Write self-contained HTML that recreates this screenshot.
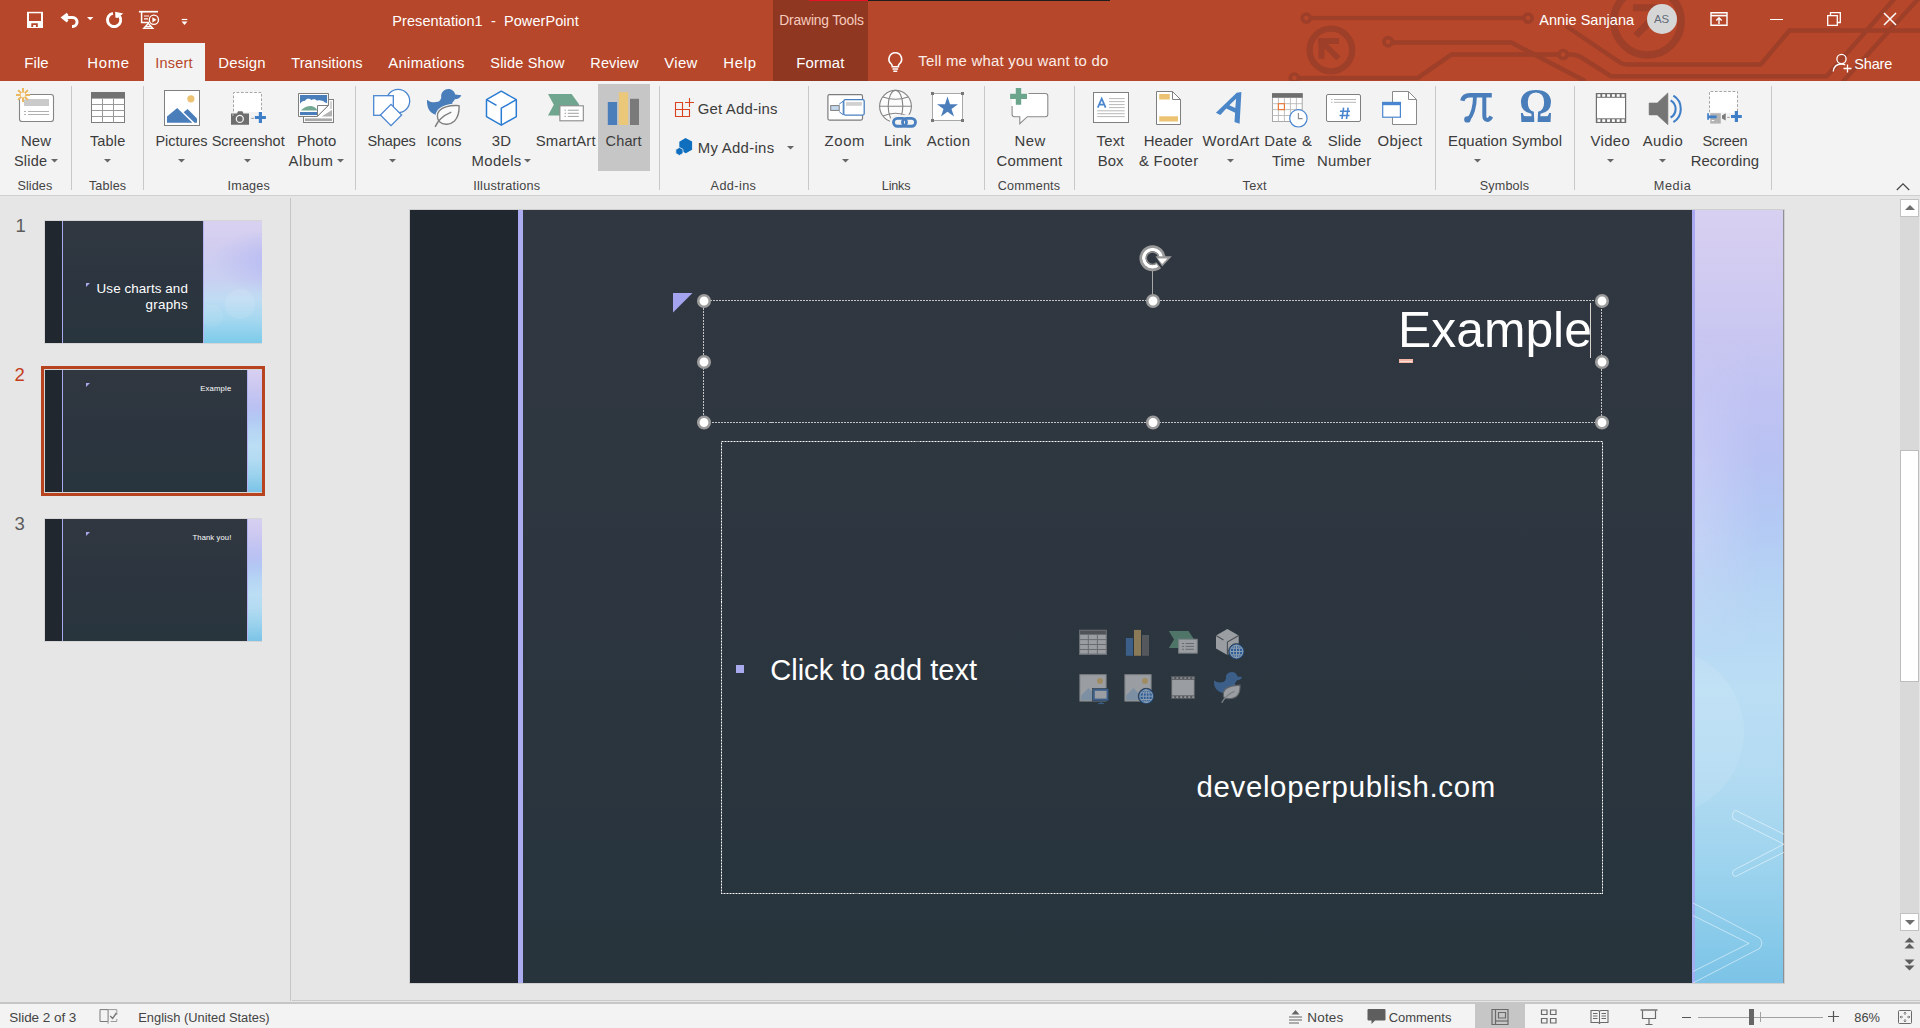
<!DOCTYPE html>
<html><head><meta charset="utf-8"><title>PowerPoint</title>
<style>
html,body{margin:0;padding:0;}
body{width:1920px;height:1028px;overflow:hidden;position:relative;background:#e6e6e6;font-family:"Liberation Sans",sans-serif;}
.b{position:absolute;display:block;}
.t{position:absolute;white-space:pre;font-family:"Liberation Sans",sans-serif;}
</style></head><body>
<div class="b" style="left:0px;top:0px;width:1920px;height:81px;background:#b7472a;"></div>
<svg class="b" style="left:0px;top:0px;" width="1920" height="81" viewBox="0 0 1920 81">
<g fill="none" stroke="#9e3f29" stroke-width="4.500" stroke-linejoin="round">
<path d="M1310.500 18.100H1523.800"/><circle cx="1306.300" cy="18.100" r="4.100" stroke-width="3.700"/><circle cx="1528.100" cy="18.100" r="4.100" stroke-width="3.700"/>
<circle cx="1330.900" cy="50" r="21.300" stroke-width="6.300"/>
<path d="M1392.300 42.500H1511.300L1585 81"/><circle cx="1388.100" cy="41.800" r="4.100" stroke-width="3.700"/>
<path d="M1298.600 78.100H1417.500L1451.300 54.600H1558.800"/><circle cx="1294.400" cy="78.100" r="4.100" stroke-width="3.700"/><circle cx="1563.100" cy="54.600" r="4.100" stroke-width="3.700"/>
<path d="M1567.300 54.600H1572Q1578 55 1583 58.500L1611.300 76.300H1826.600L1895 -2"/>
<path d="M1566 26L1620 62.500Q1623 64.500 1627 64.500H1760.700L1789.400 30.500H1922"/>
<circle cx="1647.500" cy="21.300" r="33.700" stroke-width="7.500"/>
<path d="M1842.500 82L1919 -2"/>
</g>
<g fill="none" stroke="#9e3f29">
<path d="M1318.100 40.900H1339M1321.500 38.100V58.800" stroke-width="6"/>
<path d="M1320 40L1338.500 58.500" stroke-width="5.600"/>
<path d="M1633 7.800H1664M1636 35.500L1661 10" stroke-width="7"/>
</g></svg>
<div class="b" style="left:773px;top:0px;width:94.7px;height:81px;background:#903722;"></div>
<div class="b" style="left:809px;top:0px;width:59px;height:1.2px;background:#e81123;"></div>
<div class="b" style="left:868px;top:0px;width:242px;height:1.2px;background:#1e1e1e;"></div>
<div class="b" style="left:144px;top:43px;width:61px;height:38px;background:#f3f3f3;"></div>
<svg class="b" style="left:26px;top:11px;" width="18" height="18" viewBox="0 0 18 18"><path d="M1 0.800H17V17H1Z" fill="#ffffff"/><path d="M3 2.300H15V10H3Z" fill="#b7472a"/><path d="M5.300 12.300H11.800V16H9.900V14H7.200V16H5.300Z" fill="#b7472a"/></svg>
<svg class="b" style="left:58px;top:9px;" width="24" height="22" viewBox="0 0 24 22"><g transform="translate(-58 -9)"><path d="M67.700 14L63 17.600L67.700 21.200" fill="none" stroke="#ffffff" stroke-width="3" stroke-linejoin="miter"/><path d="M63 17.600H72.600A4.450 4.450 0 0 1 72.600 26.500H72" fill="none" stroke="#ffffff" stroke-width="3"/></g></svg>
<svg class="b" style="left:86.8px;top:17.1px;" width="7" height="4" viewBox="0 0 7 4"><path d="M0 0H6.400L3.200 3.200Z" fill="#ffffff"/></svg>
<svg class="b" style="left:103px;top:9px;" width="24" height="22" viewBox="0 0 24 22"><g transform="translate(-103 -9)"><path d="M112.950 13.350A6.650 6.650 0 1 0 119.550 16.100" fill="none" stroke="#ffffff" stroke-width="2.900"/><path d="M115.200 11.800L123.200 13.400L117.600 18.100L115.400 17.600Z" fill="#ffffff"/></g></svg>
<svg class="b" style="left:138px;top:9px;" width="24" height="22" viewBox="0 0 24 22"><path d="M0.900 2.700H20" stroke="#ffffff" stroke-width="1.700"/><path d="M3.600 3V13.500H11" fill="none" stroke="#ffffff" stroke-width="1.500"/><path d="M6 7H11M6 9.800H10" stroke="#ffffff" stroke-width="1.200"/><circle cx="15.900" cy="10.800" r="4.600" fill="#b7472a" stroke="#ffffff" stroke-width="1.300"/><path d="M14.400 8.200V13.400L18.500 10.800Z" fill="#ffffff"/><path d="M10.300 14.300L5.800 19.400H14.800Z" fill="none" stroke="#ffffff" stroke-width="1.400"/><path d="M7.500 17.600H13" stroke="#ffffff" stroke-width="1.600"/></svg>
<svg class="b" style="left:181px;top:13px;" width="8" height="13" viewBox="0 0 8 13"><path d="M0.700 6.500H6.300" stroke="#ffffff" stroke-width="1.200"/><path d="M0.500 8.600H6.500L3.500 12Z" fill="#ffffff"/></svg>
<span class="t" id="title" style="left:392.3px;top:12.7px;font-size:14.50px;line-height:17px;color:#fff;letter-spacing:0.07px;">Presentation1  -  PowerPoint</span>
<span class="t" id="dt" style="left:779.3px;top:12.3px;font-size:13.85px;line-height:17px;color:#f6cbbd;letter-spacing:-0.18px;">Drawing Tools</span>
<span class="t" id="annie" style="left:1539.3px;top:11.8px;font-size:14.50px;line-height:17px;color:#fff;letter-spacing:0.04px;">Annie Sanjana</span>
<div class="b" style="left:1647px;top:4px;width:30px;height:30px;border-radius:50%;background:#d6d6d6;"></div>
<span class="t" style="left:1653.9px;top:13.3px;font-size:11.40px;line-height:13px;color:#5f6a78;letter-spacing:0.10px;">AS</span>
<svg class="b" style="left:1710px;top:11px;" width="18" height="16" viewBox="0 0 18 16"><path d="M1 1.7H17V14.3H1Z" fill="none" stroke="#ffffff" stroke-width="1.4"/><path d="M1 4.6H17" stroke="#ffffff" stroke-width="1.6"/><path d="M9 13V7M6.3 9.5L9 6.8L11.7 9.5" fill="none" stroke="#ffffff" stroke-width="1.4"/></svg>
<div class="b" style="left:1770px;top:19px;width:13px;height:1.4px;background:#ffffff;"></div>
<svg class="b" style="left:1827px;top:12px;" width="14" height="14" viewBox="0 0 14 14"><path d="M0.7 3.7H10.3V13.3H0.7Z" fill="none" stroke="#ffffff" stroke-width="1.3"/><path d="M3.5 3.5V0.7H13.3V10.5H10.5" fill="none" stroke="#ffffff" stroke-width="1.3"/></svg>
<svg class="b" style="left:1883px;top:12px;" width="14" height="14" viewBox="0 0 14 14"><path d="M1 1L13 13M13 1L1 13" stroke="#ffffff" stroke-width="1.5"/></svg>
<span class="t" style="left:24.3px;top:54.8px;font-size:14.90px;line-height:17px;color:#fff;letter-spacing:0.10px;">File</span>
<span class="t" style="left:87.3px;top:54.8px;font-size:14.90px;line-height:17px;color:#fff;letter-spacing:0.66px;">Home</span>
<span class="t" style="left:218.3px;top:54.8px;font-size:14.90px;line-height:17px;color:#fff;letter-spacing:0.17px;">Design</span>
<span class="t" style="left:291.3px;top:54.8px;font-size:14.50px;line-height:17px;color:#fff;letter-spacing:0.09px;">Transitions</span>
<span class="t" style="left:388.3px;top:54.8px;font-size:14.90px;line-height:17px;color:#fff;letter-spacing:0.27px;">Animations</span>
<span class="t" style="left:490.3px;top:54.8px;font-size:14.50px;line-height:17px;color:#fff;letter-spacing:0.19px;">Slide Show</span>
<span class="t" style="left:590.3px;top:54.8px;font-size:14.50px;line-height:17px;color:#fff;letter-spacing:0.14px;">Review</span>
<span class="t" style="left:664.3px;top:54.8px;font-size:14.90px;line-height:17px;color:#fff;letter-spacing:0.34px;">View</span>
<span class="t" style="left:723.3px;top:54.8px;font-size:14.90px;line-height:17px;color:#fff;letter-spacing:0.69px;">Help</span>
<span class="t" style="left:796.3px;top:54.8px;font-size:14.90px;line-height:17px;color:#fff;letter-spacing:0.20px;">Format</span>
<span class="t" id="insert" style="left:155.3px;top:54.8px;font-size:14.50px;line-height:17px;color:#b7472a;letter-spacing:0.19px;">Insert</span>
<svg class="b" style="left:886px;top:50px;" width="19" height="24" viewBox="0 0 19 24"><path d="M9.300 2.800A6.300 6.300 0 0 0 5.300 14C6.100 14.900 6.300 15.700 6.300 16.800H12.300C12.300 15.700 12.500 14.900 13.300 14A6.300 6.300 0 0 0 9.300 2.800Z" fill="none" stroke="#ffffff" stroke-width="1.600"/><path d="M6.500 19H12.100M7.300 21.300H11.300" stroke="#ffffff" stroke-width="1.500"/></svg>
<span class="t" id="tell" style="left:918.3px;top:52.9px;font-size:14.90px;line-height:17px;color:#fcece7;letter-spacing:0.24px;">Tell me what you want to do</span>
<svg class="b" style="left:1832px;top:53px;" width="22" height="20" viewBox="0 0 22 20"><circle cx="9.5" cy="6" r="4.6" fill="none" stroke="#ffffff" stroke-width="1.3"/><path d="M1.2 18.5C1.8 13.5 5 11 9.5 11C11 11 12.2 11.3 13.2 11.8" fill="none" stroke="#ffffff" stroke-width="1.3"/><path d="M15.5 11.5V19.5M11.5 15.5H19.5" stroke="#ffffff" stroke-width="1.3"/></svg>
<span class="t" id="share" style="left:1854.3px;top:55.5px;font-size:14.50px;line-height:17px;color:#fff;letter-spacing:-0.16px;">Share</span>
<div class="b" style="left:0px;top:81px;width:1920px;height:114px;background:#f3f3f3;"></div>
<div class="b" style="left:0px;top:194.5px;width:1920px;height:1.5px;background:#d0d0d0;"></div>
<div class="b" style="left:70.5px;top:86px;width:1.2px;height:104px;background:#c8c8c8;"></div>
<div class="b" style="left:143.0px;top:86px;width:1.2px;height:104px;background:#c8c8c8;"></div>
<div class="b" style="left:354.5px;top:86px;width:1.2px;height:104px;background:#c8c8c8;"></div>
<div class="b" style="left:659.0px;top:86px;width:1.2px;height:104px;background:#c8c8c8;"></div>
<div class="b" style="left:808.0px;top:86px;width:1.2px;height:104px;background:#c8c8c8;"></div>
<div class="b" style="left:984.0px;top:86px;width:1.2px;height:104px;background:#c8c8c8;"></div>
<div class="b" style="left:1074.0px;top:86px;width:1.2px;height:104px;background:#c8c8c8;"></div>
<div class="b" style="left:1435.0px;top:86px;width:1.2px;height:104px;background:#c8c8c8;"></div>
<div class="b" style="left:1574.0px;top:86px;width:1.2px;height:104px;background:#c8c8c8;"></div>
<div class="b" style="left:1771.0px;top:86px;width:1.2px;height:104px;background:#c8c8c8;"></div>
<div class="b" style="left:598px;top:84px;width:52px;height:87px;background:#c6c6c6;"></div>
<span class="t" style="left:20.9px;top:132.5px;font-size:14.90px;line-height:17px;color:#3c3c3c;letter-spacing:0.20px;">New</span>
<span class="t" style="left:13.9px;top:152.7px;font-size:14.50px;line-height:17px;color:#3c3c3c;letter-spacing:0.21px;">Slide</span>
<svg class="b" style="left:50.5px;top:158.9px;" width="7" height="4" viewBox="0 0 7 4"><path d="M0 0H7L3.5 3.5Z" fill="#666"/></svg>
<span class="t" style="left:17.5px;top:178.9px;font-size:12.60px;line-height:15px;color:#444444;letter-spacing:0.08px;">Slides</span>
<span class="t" style="left:89.9px;top:132.5px;font-size:14.50px;line-height:17px;color:#3c3c3c;letter-spacing:0.17px;">Table</span>
<svg class="b" style="left:104.3px;top:158.9px;" width="7" height="4" viewBox="0 0 7 4"><path d="M0 0H7L3.5 3.5Z" fill="#666"/></svg>
<span class="t" style="left:88.9px;top:178.9px;font-size:12.60px;line-height:15px;color:#444444;letter-spacing:0.16px;">Tables</span>
<span class="t" id="pictures" style="left:155.5px;top:132.5px;font-size:14.50px;line-height:17px;color:#3c3c3c;letter-spacing:-0.05px;">Pictures</span>
<svg class="b" style="left:178.4px;top:158.9px;" width="7" height="4" viewBox="0 0 7 4"><path d="M0 0H7L3.5 3.5Z" fill="#666"/></svg>
<span class="t" style="left:211.7px;top:132.5px;font-size:14.50px;line-height:17px;color:#3c3c3c;letter-spacing:-0.04px;">Screenshot</span>
<svg class="b" style="left:244.4px;top:158.9px;" width="7" height="4" viewBox="0 0 7 4"><path d="M0 0H7L3.5 3.5Z" fill="#666"/></svg>
<span class="t" style="left:296.9px;top:132.5px;font-size:14.90px;line-height:17px;color:#3c3c3c;letter-spacing:0.09px;">Photo</span>
<span class="t" style="left:288.6px;top:152.7px;font-size:14.90px;line-height:17px;color:#3c3c3c;letter-spacing:0.53px;">Album</span>
<svg class="b" style="left:336.5px;top:158.9px;" width="7" height="4" viewBox="0 0 7 4"><path d="M0 0H7L3.5 3.5Z" fill="#666"/></svg>
<span class="t" style="left:227.5px;top:178.9px;font-size:12.60px;line-height:15px;color:#444444;letter-spacing:0.21px;">Images</span>
<span class="t" style="left:367.4px;top:132.5px;font-size:14.50px;line-height:17px;color:#3c3c3c;letter-spacing:-0.15px;">Shapes</span>
<svg class="b" style="left:388.5px;top:158.9px;" width="7" height="4" viewBox="0 0 7 4"><path d="M0 0H7L3.5 3.5Z" fill="#666"/></svg>
<span class="t" style="left:426.5px;top:132.5px;font-size:14.50px;line-height:17px;color:#3c3c3c;letter-spacing:0.11px;">Icons</span>
<span class="t" style="left:491.7px;top:132.5px;font-size:14.90px;line-height:17px;color:#3c3c3c;letter-spacing:0.28px;">3D</span>
<span class="t" style="left:471.5px;top:152.7px;font-size:14.90px;line-height:17px;color:#3c3c3c;letter-spacing:0.36px;">Models</span>
<svg class="b" style="left:524.4px;top:158.9px;" width="7" height="4" viewBox="0 0 7 4"><path d="M0 0H7L3.5 3.5Z" fill="#666"/></svg>
<span class="t" style="left:535.8px;top:132.5px;font-size:14.90px;line-height:17px;color:#3c3c3c;letter-spacing:0.14px;">SmartArt</span>
<span class="t" style="left:605.6px;top:132.5px;font-size:14.50px;line-height:17px;color:#3c3c3c;letter-spacing:0.13px;">Chart</span>
<span class="t" style="left:473.3px;top:178.9px;font-size:12.68px;line-height:15px;color:#444444;letter-spacing:0.23px;">Illustrations</span>
<span class="t" style="left:697.7px;top:100.8px;font-size:14.90px;line-height:17px;color:#3c3c3c;letter-spacing:0.20px;">Get Add-ins</span>
<span class="t" style="left:697.7px;top:139.6px;font-size:14.90px;line-height:17px;color:#3c3c3c;letter-spacing:0.31px;">My Add-ins</span>
<svg class="b" style="left:786.5px;top:146.20000000000002px;" width="7" height="4" viewBox="0 0 7 4"><path d="M0 0H7L3.5 3.5Z" fill="#666"/></svg>
<span class="t" style="left:710.6px;top:178.9px;font-size:12.68px;line-height:15px;color:#444444;letter-spacing:0.39px;">Add-ins</span>
<span class="t" style="left:824.6px;top:132.5px;font-size:14.90px;line-height:17px;color:#3c3c3c;letter-spacing:0.58px;">Zoom</span>
<svg class="b" style="left:841.5px;top:158.9px;" width="7" height="4" viewBox="0 0 7 4"><path d="M0 0H7L3.5 3.5Z" fill="#666"/></svg>
<span class="t" style="left:884.1px;top:132.5px;font-size:14.50px;line-height:17px;color:#3c3c3c;letter-spacing:0.07px;">Link</span>
<span class="t" style="left:926.8px;top:132.5px;font-size:14.90px;line-height:17px;color:#3c3c3c;letter-spacing:0.36px;">Action</span>
<span class="t" style="left:881.8px;top:178.9px;font-size:12.60px;line-height:15px;color:#444444;letter-spacing:-0.16px;">Links</span>
<span class="t" style="left:1014.5px;top:132.5px;font-size:14.90px;line-height:17px;color:#3c3c3c;letter-spacing:0.46px;">New</span>
<span class="t" style="left:996.6px;top:152.7px;font-size:14.90px;line-height:17px;color:#3c3c3c;letter-spacing:0.17px;">Comment</span>
<span class="t" style="left:997.8px;top:178.9px;font-size:12.60px;line-height:15px;color:#444444;letter-spacing:0.20px;">Comments</span>
<span class="t" style="left:1096.5px;top:132.5px;font-size:14.90px;line-height:17px;color:#3c3c3c;letter-spacing:0.22px;">Text</span>
<span class="t" style="left:1097.7px;top:152.7px;font-size:14.90px;line-height:17px;color:#3c3c3c;letter-spacing:0.04px;">Box</span>
<span class="t" style="left:1143.7px;top:132.5px;font-size:14.90px;line-height:17px;color:#3c3c3c;letter-spacing:0.11px;">Header</span>
<span class="t" style="left:1138.9px;top:152.7px;font-size:14.90px;line-height:17px;color:#3c3c3c;letter-spacing:0.31px;">&amp; Footer</span>
<span class="t" style="left:1202.6px;top:132.5px;font-size:14.90px;line-height:17px;color:#3c3c3c;letter-spacing:0.38px;">WordArt</span>
<svg class="b" style="left:1227.4px;top:158.9px;" width="7" height="4" viewBox="0 0 7 4"><path d="M0 0H7L3.5 3.5Z" fill="#666"/></svg>
<span class="t" style="left:1264.2px;top:132.5px;font-size:14.90px;line-height:17px;color:#3c3c3c;letter-spacing:0.42px;">Date &amp;</span>
<span class="t" style="left:1271.9px;top:152.7px;font-size:14.90px;line-height:17px;color:#3c3c3c;letter-spacing:0.16px;">Time</span>
<span class="t" style="left:1327.7px;top:132.5px;font-size:14.90px;line-height:17px;color:#3c3c3c;letter-spacing:0.11px;">Slide</span>
<span class="t" style="left:1316.9px;top:152.7px;font-size:14.90px;line-height:17px;color:#3c3c3c;letter-spacing:0.27px;">Number</span>
<span class="t" style="left:1377.5px;top:132.5px;font-size:14.90px;line-height:17px;color:#3c3c3c;letter-spacing:0.32px;">Object</span>
<span class="t" style="left:1242.6px;top:178.9px;font-size:12.68px;line-height:15px;color:#444444;letter-spacing:0.24px;">Text</span>
<span class="t" style="left:1447.9px;top:132.5px;font-size:14.90px;line-height:17px;color:#3c3c3c;letter-spacing:0.08px;">Equation</span>
<svg class="b" style="left:1474.3px;top:158.9px;" width="7" height="4" viewBox="0 0 7 4"><path d="M0 0H7L3.5 3.5Z" fill="#666"/></svg>
<span class="t" style="left:1511.7px;top:132.5px;font-size:14.90px;line-height:17px;color:#3c3c3c;letter-spacing:0.12px;">Symbol</span>
<span class="t" style="left:1479.7px;top:178.9px;font-size:12.60px;line-height:15px;color:#444444;letter-spacing:0.18px;">Symbols</span>
<span class="t" style="left:1590.4px;top:132.5px;font-size:14.90px;line-height:17px;color:#3c3c3c;letter-spacing:0.41px;">Video</span>
<svg class="b" style="left:1607.4px;top:158.9px;" width="7" height="4" viewBox="0 0 7 4"><path d="M0 0H7L3.5 3.5Z" fill="#666"/></svg>
<span class="t" style="left:1642.7px;top:132.5px;font-size:14.90px;line-height:17px;color:#3c3c3c;letter-spacing:0.48px;">Audio</span>
<svg class="b" style="left:1659.2px;top:158.9px;" width="7" height="4" viewBox="0 0 7 4"><path d="M0 0H7L3.5 3.5Z" fill="#666"/></svg>
<span class="t" style="left:1702.6px;top:132.5px;font-size:14.50px;line-height:17px;color:#3c3c3c;letter-spacing:-0.17px;">Screen</span>
<span class="t" style="left:1690.7px;top:152.7px;font-size:14.90px;line-height:17px;color:#3c3c3c;letter-spacing:0.06px;">Recording</span>
<span class="t" style="left:1653.7px;top:178.9px;font-size:12.68px;line-height:15px;color:#444444;letter-spacing:0.65px;">Media</span>
<svg class="b" style="left:1896px;top:183.3px;" width="14" height="8" viewBox="0 0 14 8"><path d="M0.800 7L7 0.900L13.200 7" fill="none" stroke="#444" stroke-width="1.200"/></svg>
<svg class="b" style="left:0px;top:81px;" width="1920" height="113" viewBox="0 81 1920 113"><rect x="19.5" y="94.5" width="34" height="27" rx="2.6" fill="#fff" stroke="#858585" stroke-width="1.1"/><rect x="24" y="99" width="25" height="7" fill="#cacaca"/><path d="M24 111.5H26M28 111.5H49M24 114.5H26M28 114.5H49" stroke="#b0b0b0" stroke-width="1"/><circle cx="23" cy="95" r="5" fill="#f3f3f3"/><g stroke="#ebb85f" stroke-width="2" stroke-linecap="butt"><path d="M23 88V102M16 95H30M18.1 90.1L27.9 99.900M27.900 90.100L18.100 99.900"/></g><circle cx="23" cy="95" r="2.400" fill="#f7f3ea"/><rect x="91.5" y="92.5" width="33" height="30" fill="#fff" stroke="#7d7d7d" stroke-width="1"/><rect x="91" y="92" width="34" height="6.600" fill="#727272"/><path d="M102.5 98.8V122.500M113.500 98.800V122.500M92 104.500H124.500M92 110.500H124.500M92 116.500H124.500" stroke="#9a9a9a" stroke-width="1"/><rect x="164.5" y="90.5" width="35" height="35" fill="#fff" stroke="#7f7f7f" stroke-width="1"/><circle cx="190.9" cy="98.8" r="3.6" fill="#ebc373"/><path d="M167 122.8V116.4L177.2 108.1L192.4 122.8Z" fill="#4a7ebb"/><path d="M183.6 112.2L187.6 109L197 118.4V122.8H194.6Z" fill="#4a7ebb"/><rect x="233" y="92" width="29" height="20" fill="#fff"/><path d="M233.500 111.500V92.500H261.500V111.500" fill="none" stroke="#a6a6a6" stroke-width="1" stroke-dasharray="2.800 1.600"/><path d="M231 113.400H237L238 111.300H242.400L243.400 113.400H249V124.800H231Z" fill="#6e6e6e"/><circle cx="239.800" cy="118.900" r="3.500" fill="none" stroke="#f3f3f3" stroke-width="1.300"/><rect x="232.300" y="114.400" width="1.200" height="1.200" fill="#ddd"/><path d="M251.300 118.400H253.900" stroke="#a0a0a0" stroke-width="1.100"/><path d="M260.400 112V123M254.900 117.500H265.900" stroke="#3f7fc8" stroke-width="3.200"/><rect x="303.500" y="99.500" width="30" height="23" fill="#fff" stroke="#7f7f7f" stroke-width="1"/><rect x="304.900" y="118.400" width="27.100" height="2.700" fill="#a8a8a8"/><path d="M321.600 116.500L332 110V116.500Z" fill="#b2b2b2"/><rect x="329.900" y="101.300" width="2.100" height="7.700" fill="#d2d2d2"/><path d="M298.500 93.500H328.500V105.500L317.500 116.500H298.500Z" fill="#fff" stroke="#7f7f7f" stroke-width="1"/><clipPath id="pacl"><path d="M300 95H327.300V104.800L316.800 115.300H300Z"/></clipPath><g clip-path="url(#pacl)"><rect x="300" y="95" width="27.300" height="20.300" fill="#4a7ebb"/><path d="M300 104C301.500 100.500 304 101.500 305.500 100.200C307 98 310 98.300 311.300 100C313 98.700 316 99 317 100.700C319.500 99.800 323 100.500 325 102.500L327.300 103.300V112H300Z" fill="#fff"/><path d="M300.700 110.500C304 107.200 308 105.800 311 106C314 106.200 316.300 108 317.400 110.500Z" fill="#73a892"/></g><path d="M317.500 116.200V105.500H328.200Z" fill="#fff" stroke="#7f7f7f" stroke-width="1" stroke-linejoin="round"/><circle cx="398.100" cy="101" r="11.600" fill="#fff" stroke="#4a86d0" stroke-width="1.300"/><rect x="373.700" y="95.700" width="19.600" height="19.600" fill="#fff" stroke="#4a86d0" stroke-width="1.300"/><path d="M391 104.400L401.600 115L391 125.600L380.400 115Z" fill="#fff" stroke="#4a86d0" stroke-width="1.300"/><path d="M427 99.800C430 102.500 434.500 103 438.800 101.500C440 100.500 441 99.200 441.300 97.500C440.500 93.500 443.500 89 448.300 89C452 89 454.800 91.600 455.200 94.600L461.300 95.300C460.300 98 457.800 99.300 454.800 99.300C454 101 453 102 452 103C455 107 452 113 447 115.200C440 117 431 114.800 428.300 108.500C427.300 106 426.800 102.800 427 99.800Z" fill="#4a7ebb"/><path d="M459.100 105.600C452 105.200 443.500 106.500 439.300 110.800C436.500 114 437 119 439.500 121.800C443.500 125.500 450.500 124.800 454.500 121C458 117.500 459.300 111.500 459.100 105.600Z" fill="#fbfbfb" stroke="#f3f3f3" stroke-width="3.600" stroke-linejoin="round"/><path d="M459.100 105.600C452 105.200 443.500 106.500 439.300 110.800C436.500 114 437 119 439.500 121.800C443.500 125.500 450.500 124.800 454.500 121C458 117.500 459.300 111.500 459.100 105.600Z" fill="#fbfbfb" stroke="#808080" stroke-width="1.400" stroke-linejoin="round"/><path d="M435.400 126.400C438 120.500 443.500 115.500 450.800 112.400" fill="none" stroke="#808080" stroke-width="1.500" stroke-linecap="round"/><path d="M501.300 91.200L516.300 99.700V116.600L501.300 125.200L486.500 116.600V99.700Z" fill="#fff" stroke="#2b7cd3" stroke-width="1.5" stroke-linejoin="round"/><path d="M501.300 125V108.200L516.300 99.700M486.500 99.700L496.500 105.400" fill="none" stroke="#2b7cd3" stroke-width="1.5"/><path d="M548 94H571.600L579.200 104.500L571.600 115.600H548L553.800 104.700Z" fill="#70a690"/><rect x="559.900" y="105.800" width="23.400" height="15" fill="#fff" stroke="#8a8a8a" stroke-width="1.1"/><path d="M564.500 110.200H566M567.800 110.200H578.800M564.500 113.300H566M567.800 113.300H578.800M564.500 116.400H566M567.800 116.400H578.800" stroke="#a0a0a0" stroke-width="1"/><rect x="607.800" y="102" width="9.300" height="23" fill="#4a7ebb"/><rect x="618.800" y="92.200" width="9.400" height="32.800" fill="#ebc77a"/><rect x="630" y="98.800" width="9" height="26.200" fill="#7a7a7a"/><path d="M675.500 102.500H682.500V109.500H689.500V116.500H675.500ZM682.500 109.500V116.500M675.500 109.500H682.500" fill="none" stroke="#d9421c" stroke-width="1.100"/><path d="M689.500 98V107M685 102.500H694" stroke="#d9421c" stroke-width="1.100"/><path d="M685.500 138L692.100 141.600V149.700L685.800 153.200L679.300 149.700V141.800Z" fill="#106ebe"/><path d="M679.400 147.400L683 149.400V153.400L679.400 155.400L675.800 153.400V149.400Z" fill="#106ebe" stroke="#f3f3f3" stroke-width="0.800"/><rect x="827.900" y="94.700" width="34.600" height="25.400" rx="1.500" fill="#fff" stroke="#7d7d7d" stroke-width="1.200"/><path d="M839.200 104.200L843.200 101.100V114.900L839.200 111.600" fill="#fff" stroke="#4a80bf" stroke-width="1"/><rect x="830.700" y="105.600" width="8.500" height="4.800" fill="#c5d9ee" stroke="#7d7d7d" stroke-width="1"/><rect x="843.800" y="99.600" width="20.400" height="15.500" rx="1.500" fill="#fff" stroke="#4a80bf" stroke-width="1.300"/><rect x="846" y="102.100" width="15.900" height="3.700" fill="#d0d0d0"/><circle cx="895.500" cy="106.300" r="15.900" fill="#fcfcfc"/><g fill="none" stroke="#858585" stroke-width="1.100"><circle cx="895.500" cy="106.300" r="15.900"/><ellipse cx="895.500" cy="106.300" rx="7.300" ry="15.900"/><path d="M879.600 106.300H911.400M883 96.900Q895.500 101.700 908 96.900M883 116Q895.500 110.600 908 116"/></g><rect x="889.800" y="114.800" width="29.500" height="15" rx="7" fill="#f3f3f3"/><g fill="none" stroke="#4a80bf" stroke-width="2.900"><rect x="893.500" y="118.400" width="13" height="7.900" rx="3.950"/><rect x="902.500" y="118.400" width="13" height="7.900" rx="3.950"/></g><rect x="932.500" y="93.500" width="30" height="27" fill="#fff" stroke="#a8a8a8" stroke-width="1"/><g fill="#777"><rect x="931" y="92" width="3" height="3"/><rect x="961" y="92" width="3" height="3"/><rect x="931" y="119" width="3" height="3"/><rect x="961" y="119" width="3" height="3"/></g><path d="M947.500 96.600L950 104.200H958L951.500 108.900L954 116.500L947.500 111.800L941 116.500L943.500 108.900L937 104.200H945Z" fill="#4a7ebb"/><path d="M1014.600 93.500H1045.300A2.500 2.500 0 0 1 1047.800 96V114.200A2.500 2.500 0 0 1 1045.300 116.700H1027.300L1019.800 123.700V116.700H1014.600A2.500 2.500 0 0 1 1012.100 114.200V96A2.500 2.500 0 0 1 1014.600 93.500Z" fill="#fff"/><path d="M1028.500 93.500H1045.300A2.500 2.500 0 0 1 1047.800 96V114.200A2.500 2.500 0 0 1 1045.300 116.700H1027.300L1019.800 123.700V116.700H1014.600A2.500 2.500 0 0 1 1012.100 114.200V106" fill="none" stroke="#8a8a8a" stroke-width="1.100"/><path d="M1018.500 88.100V104.700M1010.100 96.400H1027" stroke="#6aa58c" stroke-width="5.400"/><rect x="1093.500" y="92.500" width="35" height="30" fill="#fff" stroke="#7f7f7f" stroke-width="1"/><path d="M1109 98.600H1124.700M1109 101.600H1124.700M1109 104.600H1124.700M1109 107.600H1124.700M1097.200 110.800H1124.700M1097.200 113.700H1124.700M1097.200 116.600H1124.700" stroke="#b0b0b0" stroke-width="0.900"/><path d="M1097.800 107.700L1101.700 98.600L1105.600 107.700M1099.200 104.700H1104.200" fill="none" stroke="#4a86d0" stroke-width="1.700"/><path d="M1156.500 91.500H1172.500L1180.500 99.500V124.500H1156.500Z" fill="#fff" stroke="#7f7f7f" stroke-width="1"/><path d="M1172.500 91.500V99.500H1180.500" fill="none" stroke="#7f7f7f" stroke-width="1"/><rect x="1159.200" y="94" width="10.600" height="5.500" fill="#ebc373"/><rect x="1159.200" y="116.300" width="18.800" height="5.200" fill="#ebc373"/><path d="M1215.900 112.800L1236.700 92.800L1241.400 92L1239.600 123.700L1234.500 121.900L1235.100 112.700L1226.300 108.600L1220.300 115ZM1229.300 105.200L1235.300 108L1236.100 98.800Z" fill="#4a86c8" fill-rule="evenodd"/><rect x="1272.500" y="93.700" width="29.700" height="27.800" fill="#fff" stroke="#a8a8a8" stroke-width="1"/><rect x="1272" y="93.200" width="30.700" height="4.600" fill="#6e6e6e"/><path d="M1278.400 97.800V121.500M1284.400 97.800V121.500M1290.400 97.800V121.500M1296.400 97.800V121.500M1272.500 103.700H1302.200M1272.500 109.600H1302.200M1272.500 115.500H1302.200" stroke="#b8b8b8" stroke-width="0.900"/><rect x="1278.400" y="103.700" width="6" height="5.900" fill="#fff" stroke="#e8793a" stroke-width="1.200"/><circle cx="1298.400" cy="118.300" r="8.700" fill="#fff" stroke="#4a86d0" stroke-width="1.200"/><path d="M1298.400 113V118.600H1302.600" fill="none" stroke="#8a8a8a" stroke-width="1.100"/><rect x="1326.500" y="94.500" width="34" height="27" rx="1.500" fill="#fff" stroke="#7f7f7f" stroke-width="1"/><path d="M1331 99.500H1332.500M1334 99.500H1356M1331 102.300H1332.500M1334 102.300H1356" stroke="#b0b0b0" stroke-width="0.900"/><path d="M1343.600 107.700L1342 119M1348.100 107.700L1346.500 119M1340 111.300H1350M1339.500 115.500H1349.500" fill="none" stroke="#4a86d0" stroke-width="1.600"/><path d="M1392.500 91.500H1408.500L1416.500 99.500V124.500H1392.500Z" fill="#fff" stroke="#8a8a8a" stroke-width="1"/><path d="M1408.500 91.500V99.500H1416.500" fill="none" stroke="#8a8a8a" stroke-width="1"/><rect x="1382.700" y="102.500" width="17.700" height="14.700" fill="#fff" stroke="#4a86d0" stroke-width="1.200"/><rect x="1382.100" y="101.900" width="18.900" height="3.300" fill="#4a86d0"/><rect x="1595.800" y="93" width="30.400" height="30" fill="#6e6e6e"/><rect x="1597" y="97.800" width="28" height="20.500" fill="#fff"/><rect x="1597.40" y="94.200" width="3" height="2.600" fill="#fff"/><rect x="1602.23" y="94.200" width="3" height="2.600" fill="#fff"/><rect x="1607.06" y="94.200" width="3" height="2.600" fill="#fff"/><rect x="1611.89" y="94.200" width="3" height="2.600" fill="#fff"/><rect x="1616.72" y="94.200" width="3" height="2.600" fill="#fff"/><rect x="1621.55" y="94.200" width="3" height="2.600" fill="#fff"/><rect x="1597.40" y="119.300" width="3" height="2.600" fill="#fff"/><rect x="1602.23" y="119.300" width="3" height="2.600" fill="#fff"/><rect x="1607.06" y="119.300" width="3" height="2.600" fill="#fff"/><rect x="1611.89" y="119.300" width="3" height="2.600" fill="#fff"/><rect x="1616.72" y="119.300" width="3" height="2.600" fill="#fff"/><rect x="1621.55" y="119.300" width="3" height="2.600" fill="#fff"/><path d="M1649.100 103H1657.200L1667.900 92.900V124.800L1657.200 114.900H1649.100Z" fill="#757575" stroke="#757575" stroke-width="0.600" stroke-linejoin="round"/><path d="M1670.600 100.300A9.900 9.900 0 0 1 1670.600 117.500M1673.400 95.700A15.500 15.500 0 0 1 1673.400 122.100" fill="none" stroke="#3f7fc8" stroke-width="2.100"/><rect x="1709" y="91" width="29" height="22" fill="#fff"/><path d="M1709.500 112.500V91.500H1737.500V112.500" fill="none" stroke="#a6a6a6" stroke-width="1" stroke-dasharray="2.800 1.600"/><rect x="1706.500" y="112.500" width="20" height="12" fill="#f3f3f3"/><rect x="1710.200" y="113.200" width="10.600" height="10.400" fill="#b2b2b2"/><path d="M1707.200 113.200H1708.900V115.400H1716.600V118.200H1708.900V119.800H1707.200Z" fill="#3f7fc8"/><rect x="1711.700" y="120.100" width="2.500" height="1" fill="#fff"/><path d="M1722 115.400L1725.700 113.200V120.600L1722 118.400Z" fill="#7a7a7a"/><path d="M1727.200 117.400H1729.700" stroke="#a0a0a0" stroke-width="1.100"/><path d="M1736.400 111.100V121.900M1731 116.500H1741.800" stroke="#3f7fc8" stroke-width="3.200"/></svg>
<svg class="b" style="left:1455px;top:88px;" width="42" height="40" viewBox="1455 88 42 40"><g fill="none" stroke="#4a7ebb" stroke-linecap="butt"><path d="M1462.300 100.800C1463.300 96.500 1465.800 95.300 1470 95.300H1491.800" stroke-width="4.500"/><path d="M1475 96C1474.800 105 1473.500 113.500 1468.500 119.500" stroke-width="3.800"/><path d="M1484.300 96V115.500C1484.300 120.500 1488.500 121.800 1491.300 116.500" stroke-width="4"/></g><circle cx="1467.400" cy="119.400" r="3.200" fill="#4a7ebb"/></svg>
<span class="t" id="omega" style="left:1519.3px;top:79.2px;font-family:'Liberation Serif',serif;font-weight:bold;font-size:49px;line-height:54px;color:#4a7ebb;transform-origin:0 0;transform:scaleX(0.863);">&#937;</span>
<div class="b" style="left:290px;top:198px;width:1.2px;height:803px;background:#c6c6c6;"></div>
<div class="b" style="left:44.0px;top:220.0px;width:218.4px;height:123.7px;background:rgba(205,205,205,.7);"></div>
<div class="b" style="left:44.7px;top:220.7px;width:217.0px;height:122.3px;background:#21272f;"></div>
<div class="b" style="left:61.7px;top:220.7px;width:1.5px;height:122.3px;background:#a9a9ee;"></div>
<div class="b" style="left:63.2px;top:220.7px;width:139.8px;height:122.3px;background:linear-gradient(180deg,#303741 0%,#2c353f 50%,#28353d 100%);"></div>
<div class="b" style="left:203px;top:220.7px;width:58.69999999999999px;height:122.3px;background:linear-gradient(180deg,#d9d1f0 0%,#d0cdf0 25%,#c9d0f1 48%,#bfdcf3 64%,#a6d8f0 80%,#7dcbea 100%);"></div>
<div class="b" style="left:203px;top:220.7px;width:1px;height:122.3px;background:#b4b2f2;"></div>
<svg class="b" style="left:86px;top:282.7px;" width="4" height="4" viewBox="0 0 4 4"><path d="M0 0H4L0 4Z" fill="#a9a9ee"/></svg>
<div class="b" style="left:41.2px;top:366.2px;width:223.8px;height:129.7px;background:#b8441f;"></div>
<div class="b" style="left:44px;top:369px;width:218.3px;height:124px;background:#ececec;"></div>
<div class="b" style="left:44.0px;top:369.2px;width:218.4px;height:123.7px;background:rgba(205,205,205,.7);"></div>
<div class="b" style="left:44.7px;top:369.9px;width:217.0px;height:122.3px;background:#21272f;"></div>
<div class="b" style="left:61.7px;top:369.9px;width:1.5px;height:122.3px;background:#a9a9ee;"></div>
<div class="b" style="left:63.2px;top:369.9px;width:183.8px;height:122.3px;background:linear-gradient(180deg,#303741 0%,#2c353f 50%,#28353d 100%);"></div>
<div class="b" style="left:247px;top:369.9px;width:14.699999999999989px;height:122.3px;background:linear-gradient(180deg,#d7d0f1 0%,#d1cbf1 8%,#c9c7f1 16%,#c0c3f2 24%,#b8c2f3 32%,#b3c9f4 40%,#b6d5f4 50%,#bbdef4 62%,#b3dbf2 73%,#9fd4ee 84%,#86c9e9 95%,#7cc3e7 100%);"></div>
<div class="b" style="left:247px;top:369.9px;width:1px;height:122.3px;background:#b4b2f2;"></div>
<svg class="b" style="left:86px;top:382.9px;" width="4" height="4" viewBox="0 0 4 4"><path d="M0 0H4L0 4Z" fill="#a9a9ee"/></svg>
<div class="b" style="left:44.0px;top:518.0999999999999px;width:218.4px;height:123.7px;background:rgba(205,205,205,.7);"></div>
<div class="b" style="left:44.7px;top:518.8px;width:217.0px;height:122.3px;background:#21272f;"></div>
<div class="b" style="left:61.7px;top:518.8px;width:1.5px;height:122.3px;background:#a9a9ee;"></div>
<div class="b" style="left:63.2px;top:518.8px;width:183.8px;height:122.3px;background:linear-gradient(180deg,#303741 0%,#2c353f 50%,#28353d 100%);"></div>
<div class="b" style="left:247px;top:518.8px;width:14.699999999999989px;height:122.3px;background:linear-gradient(180deg,#d7d0f1 0%,#d1cbf1 8%,#c9c7f1 16%,#c0c3f2 24%,#b8c2f3 32%,#b3c9f4 40%,#b6d5f4 50%,#bbdef4 62%,#b3dbf2 73%,#9fd4ee 84%,#86c9e9 95%,#7cc3e7 100%);"></div>
<div class="b" style="left:247px;top:518.8px;width:1px;height:122.3px;background:#b4b2f2;"></div>
<svg class="b" style="left:86px;top:531.8px;" width="4" height="4" viewBox="0 0 4 4"><path d="M0 0H4L0 4Z" fill="#a9a9ee"/></svg>
<div class="b" style="left:203px;top:220.7px;width:58.7px;height:122.3px;overflow:hidden;"><div class="b" style="left:8px;top:12px;width:70px;height:62px;background:radial-gradient(ellipse at 100% 45%,rgba(165,172,245,.6),rgba(165,172,245,0) 70%);"></div><div class="b" style="left:22px;top:68px;width:30px;height:30px;border-radius:50%;background:rgba(255,255,255,.10);"></div><div class="b" style="left:-2px;top:84px;width:22px;height:22px;border-radius:50%;background:rgba(255,255,255,.06);"></div></div>
<span class="t" id="n1" style="left:15.5px;top:215.0px;font-size:18.50px;line-height:22px;color:#5c5c5c;">1</span>
<span class="t" style="left:14.5px;top:364.0px;font-size:18.50px;line-height:22px;color:#c43e1c;">2</span>
<span class="t" style="left:14.5px;top:513.0px;font-size:18.50px;line-height:22px;color:#5c5c5c;">3</span>
<span class="t" id="th1a" style="left:96.6px;top:281.0px;font-size:13.40px;line-height:16px;color:#fff;letter-spacing:0.09px;">Use charts and</span>
<span class="t" style="left:145.6px;top:296.5px;font-size:13.40px;line-height:16px;color:#fff;letter-spacing:0.24px;">graphs</span>
<span class="t" style="left:200.2px;top:383.5px;font-size:7.70px;line-height:9px;color:#fff;letter-spacing:0.19px;">Example</span>
<span class="t" style="left:192.5px;top:532.5px;font-size:7.60px;line-height:9px;color:#fff;letter-spacing:0.14px;">Thank you!</span>
<div class="b" style="left:409px;top:209px;width:1376px;height:775px;background:#cfcfcf;"></div>
<div class="b" style="left:410px;top:210px;width:1374px;height:773px;background:#21272f;"></div>
<div class="b" style="left:518px;top:210px;width:5.2px;height:773px;background:#abacf0;"></div>
<div class="b" style="left:523.2px;top:210px;width:1169.8px;height:773px;background:linear-gradient(180deg,#303741 0%,#2e3640 35%,#2a353e 70%,#27343c 100%);"></div>
<div class="b" style="left:1693px;top:210px;width:90.2px;height:773px;background:linear-gradient(180deg,#d7d0f1 0%,#d1cbf1 8%,#c9c7f1 16%,#c0c3f2 24%,#b8c2f3 32%,#b3c9f4 40%,#b6d5f4 50%,#bbdef4 62%,#b3dbf2 73%,#9fd4ee 84%,#86c9e9 95%,#7cc3e7 100%);"></div>
<div class="b" style="left:1693px;top:210px;width:90.5px;height:773px;overflow:hidden;"><div class="b" style="left:0;top:120px;width:90.5px;height:330px;background:linear-gradient(90deg,rgba(225,222,248,.38),rgba(225,222,248,0) 75%);-webkit-mask-image:linear-gradient(180deg,transparent,#000 40%,#000 60%,transparent);"></div><div class="b" style="left:-115px;top:439px;width:166px;height:166px;border-radius:50%;background:rgba(255,255,255,.09);"></div></div>
<div class="b" style="left:1692px;top:210px;width:3px;height:773px;background:linear-gradient(180deg,#aaa8f0,#a3aef2);"></div>
<div class="b" style="left:1783px;top:210px;width:1px;height:773px;background:rgba(190,190,190,.7);"></div>
<svg class="b" style="left:1693px;top:780px;" width="90.5" height="203" viewBox="0 0 90.5 203"><g fill="none" stroke="rgba(255,255,255,.5)" stroke-width="1" stroke-linejoin="round"><path d="M91 54.200L42.500 30.300Q38.500 31.500 40 38.800L91 64.300M91 64L40 90.600Q38.500 96 42.500 96.500L91 72.300"/><path d="M-1 122.500L66.500 158Q71 163 66.500 168.500L-1 203.500M-1 135L56 163.400L-1 192"/></g></svg>
<svg class="b" style="left:703px;top:300px;" width="899" height="123" viewBox="0 0 899 123"><rect x="0.5" y="0.5" width="898" height="122" fill="none" stroke="#c4c4c4" stroke-width="1" stroke-dasharray="2 1" shape-rendering="crispEdges"/></svg>
<svg class="b" style="left:721px;top:441px;" width="883" height="454" viewBox="0 0 883 454"><rect x="0.5" y="0.5" width="881" height="452" fill="none" stroke="#8f949a" stroke-width="1" shape-rendering="crispEdges"/><rect x="0.5" y="0.5" width="881" height="452" fill="none" stroke="#ffffff" stroke-width="1" stroke-dasharray="1 2" shape-rendering="crispEdges"/></svg>
<div class="b" style="left:1152px;top:271px;width:1.3px;height:24px;background:#a8a8a8;"></div>
<svg class="b" style="left:1136px;top:242px;" width="40" height="32" viewBox="1136 242 40 32"><circle cx="1152.5" cy="258.2" r="11.750" fill="none" stroke="#9a9a9a" stroke-width="2.600"/><circle cx="1152.5" cy="258.2" r="8.700" fill="none" stroke="#fff" stroke-width="3.600"/><circle cx="1152.5" cy="258.2" r="6.200" fill="none" stroke="#8e8e8e" stroke-width="1.500"/><path d="M1152.5 258.2L1167.49 257.68L1167.91 265.38L1161.73 270.02Z" fill="#2f3740"/><path d="M1155.500 256.300H1171.800L1162.200 266.400Z" fill="#9a9a9a"/><path d="M1157.600 258.600H1167.400L1162.200 264Z" fill="#fff"/><path d="M1155.95 262.61L1160.50 268.44" stroke="#9a9a9a" stroke-width="1.200"/></svg>
<svg class="b" style="left:690px;top:290px;" width="930" height="145" viewBox="690 290 930 145"><circle cx="704" cy="301" r="5.750" fill="#fff" stroke="#9b9b9b" stroke-width="2.600"/><circle cx="1153" cy="301" r="5.750" fill="#fff" stroke="#9b9b9b" stroke-width="2.600"/><circle cx="1602" cy="301" r="5.750" fill="#fff" stroke="#9b9b9b" stroke-width="2.600"/><circle cx="704" cy="362" r="5.750" fill="#fff" stroke="#9b9b9b" stroke-width="2.600"/><circle cx="1602" cy="362" r="5.750" fill="#fff" stroke="#9b9b9b" stroke-width="2.600"/><circle cx="704" cy="422.5" r="5.750" fill="#fff" stroke="#9b9b9b" stroke-width="2.600"/><circle cx="1153" cy="422.5" r="5.750" fill="#fff" stroke="#9b9b9b" stroke-width="2.600"/><circle cx="1602" cy="422.5" r="5.750" fill="#fff" stroke="#9b9b9b" stroke-width="2.600"/></svg>
<svg class="b" style="left:673px;top:293px;" width="20" height="20" viewBox="0 0 20 20"><path d="M0 0H19.500L0 19.500Z" fill="#a3a3f0"/></svg>
<span class="t" id="ex" style="left:1398.1px;top:300.8px;font-size:49.80px;line-height:58px;color:#fff;">Example</span>
<div class="b" style="left:1590px;top:303px;width:1.2px;height:55px;background:#d9d2cc;"></div>
<div class="b" style="left:1399px;top:359px;width:14px;height:4px;background:#f4b6a6;"></div>
<div class="b" style="left:1400px;top:360.5px;width:12px;height:1px;background:#fbe0d8;"></div>
<div class="b" style="left:735.6px;top:665.2px;width:8px;height:8px;background:#a9a9ee;"></div>
<span class="t" id="click" style="left:770.2px;top:652.8px;font-size:29.00px;line-height:34px;color:#fff;letter-spacing:0.03px;">Click to add text</span>
<span class="t" id="devpub" style="left:1196.5px;top:770.3px;font-size:29.40px;line-height:34px;color:#fff;letter-spacing:0.67px;">developerpublish.com</span>
<svg class="b" style="left:1070px;top:620px;" width="190" height="95" viewBox="1070 620 190 95"><rect x="1079.100" y="629.900" width="27.700" height="24.700" fill="#9a9ea2"/><rect x="1079.100" y="629.900" width="27.700" height="4.700" fill="#505458"/><path d="M1088.300 634.600V654.600M1097.400 634.600V654.600M1079.100 639.600H1106.800M1079.100 644.500H1106.800M1079.100 649.500H1106.800" stroke="#686c70" stroke-width="1"/><rect x="1079.600" y="630.400" width="26.700" height="23.700" fill="none" stroke="#686c70" stroke-width="1"/><rect x="1125.900" y="638" width="7.100" height="17.800" fill="#3c5f8a"/><rect x="1134" y="629.900" width="7" height="25.900" fill="#8a7a58"/><rect x="1142" y="635" width="7" height="20.800" fill="#54585c"/><path d="M1168.800 630.900H1188.500L1193.700 638.800L1190 647.900H1168.800L1174 639.400Z" fill="#4f7568"/><rect x="1178.700" y="639.300" width="18.500" height="13.800" fill="#9a9ea2" stroke="#7e8286" stroke-width="1"/><path d="M1182 643.500H1184M1185.500 643.500H1194M1182 646.400H1184M1185.500 646.400H1194M1182 649.300H1184M1185.500 649.300H1194" stroke="#686c70" stroke-width="1"/><path d="M1227.400 629.100L1238.700 635.600V648.600L1227.400 655.100L1216 648.600V635.600Z" fill="#9a9ea2"/><path d="M1216 635.600L1223.500 639.900M1227.400 655.100V642.100L1238.700 635.600" fill="none" stroke="#4a4e52" stroke-width="1.100"/><circle cx="1236.5" cy="651.5" r="7.900" fill="#2a5d98" stroke="#28343d" stroke-width="0.800"/><g fill="none" stroke="#8f9fb0" stroke-width="1"><ellipse cx="1236.5" cy="651.5" rx="3" ry="6.300"/><path d="M1230.2 651.5H1242.8M1236.5 645.2V657.8M1231.2 648.2H1241.8M1231.2 654.8H1241.8"/><circle cx="1236.5" cy="651.5" r="6.300"/></g><rect x="1079.900" y="674.700" width="26.200" height="26.400" fill="#9a9ea2" stroke="#7e8286" stroke-width="1"/><circle cx="1100" cy="680.900" r="3" fill="#a08c62"/><path d="M1081.200 699.900V695.500L1088.500 688L1100 699.900Z" fill="#7c8fa3"/><rect x="1092.600" y="688.500" width="16.200" height="12.500" fill="#3c5f8a" stroke="#28343d" stroke-width="0.600"/><rect x="1094.800" y="690.800" width="11.800" height="7.800" fill="#9a9ea2"/><path d="M1098 703.600H1104M1100 702.800H1102" stroke="#3c5f8a" stroke-width="1"/><rect x="1124.900" y="674.700" width="26.200" height="26.400" fill="#9a9ea2" stroke="#7e8286" stroke-width="1"/><circle cx="1145" cy="680.900" r="3" fill="#a08c62"/><path d="M1126.200 699.900V695.500L1133.500 688L1145 699.900Z" fill="#7c8fa3"/><circle cx="1146.2" cy="696.2" r="7.900" fill="#2a5d98" stroke="#28343d" stroke-width="0.800"/><g fill="none" stroke="#8f9fb0" stroke-width="1"><ellipse cx="1146.2" cy="696.2" rx="3" ry="6.300"/><path d="M1139.9 696.2H1152.5M1146.2 689.9000000000001V702.5M1140.9 692.9000000000001H1151.5M1140.9 699.5H1151.5"/><circle cx="1146.2" cy="696.2" r="6.300"/></g><rect x="1171.100" y="676.200" width="23.800" height="22.800" fill="#9a9ea2"/><rect x="1171.100" y="676.200" width="23.800" height="3.600" fill="#54585c"/><rect x="1171.100" y="695.400" width="23.800" height="3.600" fill="#54585c"/><path d="M1172.300 678H1194.500" stroke="#9a9ea2" stroke-width="1.700" stroke-dasharray="1.900 2.100"/><path d="M1172.300 697.200H1194.500" stroke="#9a9ea2" stroke-width="1.700" stroke-dasharray="1.900 2.100"/><rect x="1171.600" y="676.700" width="22.800" height="21.800" fill="none" stroke="#54585c" stroke-width="1"/><path d="M1214 680.500C1216.500 682.500 1220 683 1223.500 682C1225 681 1225.800 679.500 1226 678C1225.500 675 1228 672 1231.800 672C1234.800 672 1237 674 1237.300 676.500L1242.200 677C1241.400 679.300 1239.400 680.300 1237 680.300C1236.400 681.600 1235.500 682.500 1234.700 683.200C1237 686.500 1234.500 691 1230.500 692.800C1224.500 694.300 1217.500 692.500 1215.200 687.500C1214.300 685.500 1213.800 683 1214 680.500Z" fill="#3c5f8a"/><path d="M1223.800 697.200C1221.800 690 1226 685.800 1240 685.100C1240.600 694 1237 699.500 1226.300 698.500Z" fill="#9a9ea2" stroke="#5e6266" stroke-width="1.100"/><path d="M1221.800 702.800C1224.500 697.500 1229 693.500 1234.500 691.300" fill="none" stroke="#7e8286" stroke-width="1.400"/></svg>
<div class="b" style="left:1900px;top:199px;width:18.5px;height:732px;background:#d9d9d9;"></div>
<div class="b" style="left:1900px;top:198.5px;width:17px;height:16.2px;background:#fff;border:1px solid #c2c2c2;"></div>
<svg class="b" style="left:1904.5px;top:205.0px;" width="10" height="5" viewBox="0 0 10 5"><path d="M0 5L5 0L10 5Z" fill="#6e6e6e"/></svg>
<div class="b" style="left:1900px;top:913px;width:17px;height:16.2px;background:#fff;border:1px solid #c2c2c2;"></div>
<svg class="b" style="left:1904.5px;top:919.5px;" width="10" height="5" viewBox="0 0 10 5"><path d="M0 0H10L5 5Z" fill="#6e6e6e"/></svg>
<div class="b" style="left:1900px;top:449.500px;width:17px;height:230px;background:#fff;border:1px solid #bdbdbd;"></div>
<svg class="b" style="left:1904px;top:937px;" width="11" height="12" viewBox="0 0 11 12"><path d="M0.500 5.500L5.500 0.500L10.500 5.500Z M0.500 11.500L5.500 6.500L10.500 11.500Z" fill="#5e5e5e"/></svg>
<svg class="b" style="left:1904px;top:959px;" width="11" height="12" viewBox="0 0 11 12"><path d="M0.500 0.500H10.500L5.500 5.500Z M0.500 6.500H10.500L5.500 11.500Z" fill="#5e5e5e"/></svg>
<div class="b" style="left:292px;top:1000px;width:1628px;height:1.2px;background:#c9c9c9;"></div>
<div class="b" style="left:0px;top:1002px;width:1920px;height:1.5px;background:#c6c6c6;"></div>
<div class="b" style="left:0px;top:1003.5px;width:1920px;height:24.5px;background:#f3f3f3;"></div>
<span class="t" id="st1" style="left:9.3px;top:1010.1px;font-size:13.50px;line-height:16px;color:#444;letter-spacing:-0.05px;">Slide 2 of 3</span>
<svg class="b" style="left:99px;top:1008px;" width="20" height="18" viewBox="0 0 20 18"><path d="M1 1.600H9.100V13.500H1Z" fill="none" stroke="#7a7a7a" stroke-width="1"/><path d="M9.100 1.600H17.800V7M17.800 11V13.500H11.500M9.100 13.500V15.800" fill="none" stroke="#9a9a9a" stroke-width="1"/><path d="M11.200 8L13.600 10.500L17.400 5" fill="none" stroke="#777" stroke-width="1.400"/></svg>
<span class="t" id="st2" style="left:138.3px;top:1010.1px;font-size:12.85px;line-height:16px;color:#444;letter-spacing:-0.00px;">English (United States)</span>
<svg class="b" style="left:1288px;top:1009px;" width="16" height="16" viewBox="0 0 16 16"><path d="M7.500 1L11.500 5.500H3.500Z" fill="#666"/><path d="M1 8H14M1 11H14M1 14H11" stroke="#666" stroke-width="1.200"/></svg>
<span class="t" style="left:1307.3px;top:1010.1px;font-size:13.50px;line-height:16px;color:#444;letter-spacing:0.17px;">Notes</span>
<svg class="b" style="left:1367px;top:1008px;" width="20" height="18" viewBox="0 0 20 18"><path d="M1.500 1H17.500A1 1 0 0 1 18.500 2V11.500A1 1 0 0 1 17.500 12.500H8L4.500 16V12.500H1.500A1 1 0 0 1 0.500 11.500V2A1 1 0 0 1 1.500 1Z" fill="#5e5e5e"/></svg>
<span class="t" style="left:1388.7px;top:1010.1px;font-size:12.97px;line-height:16px;color:#444;">Comments</span>
<div class="b" style="left:1475px;top:1003.5px;width:50px;height:24.5px;background:#c6c6c6;"></div>
<svg class="b" style="left:1491px;top:1008px;" width="18" height="18" viewBox="0 0 18 18"><path d="M1 1.500H17V16.500H1Z" fill="none" stroke="#6a6a6a" stroke-width="1.200"/><path d="M4.500 1.500V16.500" stroke="#6a6a6a" stroke-width="1.200"/><path d="M7.500 4.500H14.500V10H7.500Z" fill="none" stroke="#6a6a6a" stroke-width="1.200"/><path d="M4.500 13H17" stroke="#6a6a6a" stroke-width="1.200"/></svg>
<svg class="b" style="left:1540px;top:1008px;" width="18" height="18" viewBox="0 0 18 18"><path d="M1.500 2H7V6.500H1.500ZM10.500 2H16V6.500H10.500ZM1.500 10.500H7V15H1.500ZM10.500 10.500H16V15H10.500Z" fill="none" stroke="#6a6a6a" stroke-width="1.200"/></svg>
<svg class="b" style="left:1590px;top:1008px;" width="19" height="18" viewBox="0 0 19 18"><path d="M1 2.500H8Q9.500 2.500 9.500 4Q9.500 2.500 11 2.500H18V14.500H11Q9.500 14.500 9.500 16Q9.500 14.500 8 14.500H1Z" fill="none" stroke="#6a6a6a" stroke-width="1.100"/><path d="M9.500 4V16M3 5.500H7.500M3 8H7.500M3 10.500H7.500M11.500 5.500H16M11.500 8H16M11.500 10.500H16" stroke="#6a6a6a" stroke-width="1"/></svg>
<svg class="b" style="left:1640px;top:1008px;" width="18" height="18" viewBox="0 0 18 18"><path d="M0.500 2H17.500" stroke="#6a6a6a" stroke-width="1.400"/><path d="M2.500 2.500V10.500H15.500V2.500M9 10.500V16M5.500 16.500H12.500" fill="none" stroke="#6a6a6a" stroke-width="1.200"/></svg>
<div class="b" style="left:1682px;top:1016.5px;width:9px;height:1.2px;background:#555;"></div>
<div class="b" style="left:1698px;top:1016.5px;width:125px;height:1px;background:#a0a0a0;"></div>
<div class="b" style="left:1760px;top:1012px;width:1px;height:10px;background:#a0a0a0;"></div>
<div class="b" style="left:1749px;top:1009px;width:5px;height:16px;background:#666;"></div>
<svg class="b" style="left:1828px;top:1011px;" width="11" height="11" viewBox="0 0 11 11"><path d="M5.500 0V11M0 5.500H11" stroke="#555" stroke-width="1.200"/></svg>
<span class="t" style="left:1854.3px;top:1010.1px;font-size:12.85px;line-height:16px;color:#444;letter-spacing:-0.04px;">86%</span>
<svg class="b" style="left:1897.5px;top:1010px;" width="14" height="14" viewBox="0 0 14 14"><rect x="0.500" y="0.500" width="13" height="13" rx="1" fill="none" stroke="#6a6a6a" stroke-width="1"/><path d="M7 2V5M7 9V12M2 7H5M9 7H12M5.800 3.400L7 2.200L8.200 3.400M5.800 10.600L7 11.800L8.200 10.600M3.400 5.800L2.200 7L3.400 8.200M10.600 5.800L11.800 7L10.600 8.200" fill="none" stroke="#6a6a6a" stroke-width="0.900"/></svg>
</body></html>
